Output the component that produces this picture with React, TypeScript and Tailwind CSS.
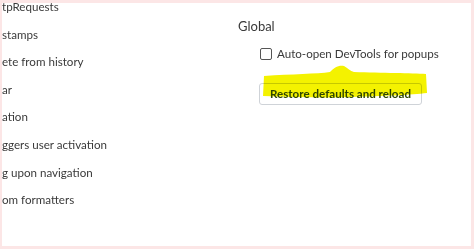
const leftRows = [
  "tpRequests",
  "stamps",
  "ete from history",
  "ar",
  "ation",
  "ggers user activation",
  "g upon navigation",
  "om formatters",
];

export default function App() {
  return (
    <div
      className="w-[474px] h-[249px] overflow-hidden bg-white border-t-[3px] border-r-[3px] border-b-[3px] border-l-[2px] border-[#fce6e6] text-[#3a3a3a]"
      style={{ fontFamily: 'Lato, "Open Sans", sans-serif' }}
    >
      <div className="flex h-full">
        <div className="w-[236px] shrink-0 -mt-[10px] flex flex-col">
          {leftRows.map((t) => (
            <div key={t} className="h-[27.6px] flex items-center text-[11.6px] whitespace-nowrap">
              {t}
            </div>
          ))}
        </div>

        <div className="flex flex-col pt-[14px]">
          <div className="text-[13px] leading-[18px]">Global</div>
          <label className="mt-[11px] ml-[22px] flex items-center gap-[5px] text-[11.6px] leading-[16px]">
            <span className="w-[12px] h-[12px] border border-[#555] rounded-[2px] bg-white" />
            Auto-open DevTools for popups
          </label>
          <div className="relative mt-[18px] ml-[21px] w-fit">
            <button className="h-[22px] px-[10px] border border-[#cfd3d8] rounded-[3px] bg-white text-[11.6px] font-bold text-[#2f4800] whitespace-nowrap">
              Restore defaults and reload
            </button>
            <svg
              className="absolute left-[3px] -top-[15px] pointer-events-none mix-blend-multiply"
              width="166"
              height="33"
              viewBox="0 0 166 33"
            >
              <path
                d="M2 11 C30 9 55 9 68 7 C72 3 76 0 82 1 C86 3 88 6 92 7 C120 8 150 8 164 9 L165 28 C150 30 120 31 90 32 C60 33 30 32 1 31 Z"
                fill="#f4f200"
              />
            </svg>
          </div>
        </div>
      </div>
    </div>
  );
}
